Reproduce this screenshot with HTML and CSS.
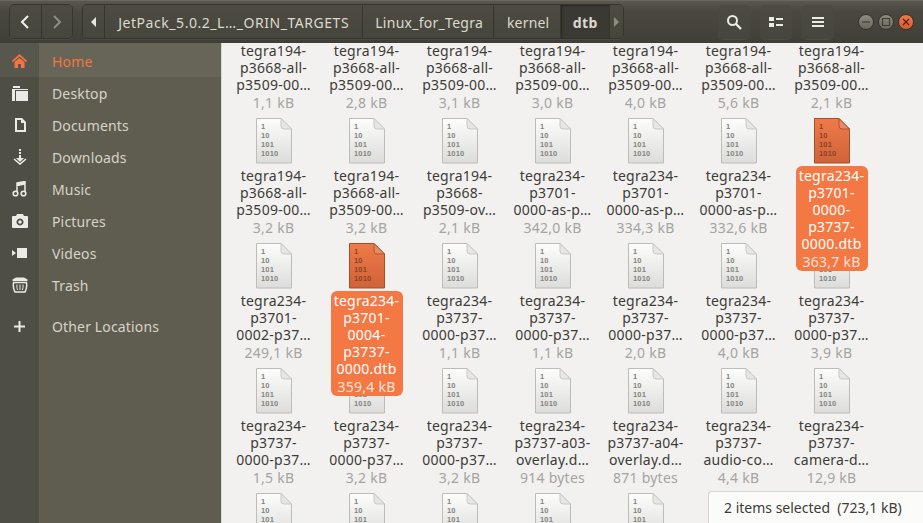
FILE: index.html
```html
<!DOCTYPE html>
<html lang="en">
<head>
<meta charset="utf-8">
<title>dtb</title>
<link rel="stylesheet" href="styles.css">
</head>
<body>
<svg class="defs" width="0" height="0" aria-hidden="true">
  <defs>
    <linearGradient id="paper" x1="0" y1="0" x2="0" y2="1"><stop offset="0" stop-color="#fdfdfc"/><stop offset="1" stop-color="#dcdcda"/></linearGradient>
    <linearGradient id="paperSel" x1="0" y1="0" x2="0" y2="1"><stop offset="0" stop-color="#ee7a4a"/><stop offset="1" stop-color="#cf6338"/></linearGradient>
    <symbol id="doc" viewBox="0 0 36 46">
      <path d="M.5.5H25L35.500 11V45H.5Z" fill="url(#paper)" stroke="#bcbcb8"/>
      <path d="M25 .5V8a3 3 0 0 0 3 3H35.500Z" fill="#e6e6e4" stroke="#c8c8c4"/>
      <g class="bits" fill="#85857e"><text x="5" y="11">1</text><text x="5" y="20">10</text><text x="5" y="29">101</text><text x="5" y="38">1010</text></g>
    </symbol>
    <symbol id="docsel" viewBox="0 0 36 46">
      <path d="M.5.5H25L35.500 11V45H.5Z" fill="url(#paperSel)" stroke="#a94c28"/>
      <path d="M25 .5V8a3 3 0 0 0 3 3H35.500Z" fill="#e98a63" stroke="#b3532d"/>
      <g class="bits" fill="#8a4426"><text x="5" y="11">1</text><text x="5" y="20">10</text><text x="5" y="29">101</text><text x="5" y="38">1010</text></g>
    </symbol>
  </defs>
</svg>
<div class="window">
  <header class="header">
    <div class="group nav">
      <button class="btn nav-btn"><svg width="12" height="14" viewBox="0 0 12 14"><path d="M9 1 3 7l6 6" fill="none" stroke="#f2f1ed" stroke-width="2"/></svg></button>
      <button class="btn nav-btn"><svg width="12" height="14" viewBox="0 0 12 14"><path d="m3 1 6 6-6 6" fill="none" stroke="#8f8d82" stroke-width="2"/></svg></button>
    </div>
    <div class="group path">
      <button class="btn seg seg-arrow"><svg width="6" height="10" viewBox="0 0 6 10"><path d="M5 0v10L0 5Z" fill="#e8e6e0"/></svg></button>
      <button class="btn seg seg-jet">JetPack_5.0.2_L…_ORIN_TARGETS</button>
      <button class="btn seg seg-linux">Linux_for_Tegra</button>
      <button class="btn seg seg-kernel">kernel</button>
      <button class="btn seg seg-dtb">dtb</button>
      <button class="btn seg seg-end"><svg width="6" height="10" viewBox="0 0 6 10"><path d="M0 0v10l5-5Z" fill="#8f8d82"/></svg></button>
    </div>
    <div class="tools">
      <button class="group btn tool"><svg width="16" height="16" viewBox="0 0 16 16"><circle cx="6.5" cy="6.5" r="4.5" fill="none" stroke="#eceae5" stroke-width="2"/><path d="m10 10 5 5" stroke="#eceae5" stroke-width="2.4"/></svg></button>
      <button class="group btn tool"><svg width="14" height="12" viewBox="0 0 14 12"><path d="M0 1h5v4H0zM7 2h7v2H7zM0 7h5v4H0zM7 8h7v2H7z" fill="#eceae5"/></svg></button>
      <button class="group btn tool"><svg width="14" height="12" viewBox="0 0 14 12"><path d="M1 1h12v2H1zM1 5h12v2H1zM1 9h12v2H1z" fill="#eceae5"/></svg></button>
    </div>
    <div class="winctl">
      <span class="wc"><svg width="10" height="10" viewBox="0 0 10 10"><path d="M1 5h8" stroke="#3e3d36" stroke-width="1.2"/></svg></span>
      <span class="wc"><svg width="10" height="10" viewBox="0 0 10 10"><path d="M1.5 1.5h7v7h-7z" fill="none" stroke="#3e3d36" stroke-width="1.2"/></svg></span>
      <span class="wc wc-close"><svg width="10" height="10" viewBox="0 0 10 10"><path d="m2 2 6 6M8 2l-6 6" stroke="#4b2414" stroke-width="1.3"/></svg></span>
    </div>
  </header>
  <div class="body">
    <nav class="side">
      <a class="place active"><span class="pi"><svg width="17" height="16" viewBox="0 0 17 16"><path d="M8.5 1 0.8 8l1.2 1.2L8.5 3.500 15 9.200 16.200 8ZM3.500 9v6H7v-4h3v4h3.500V9L8.500 5Z" fill="#f47542"/></svg></span><span class="pl">Home</span></a>
      <a class="place"><span class="pi"><svg width="16" height="15" viewBox="0 0 16 15"><path d="M1 0h7v2H1zM0 3h3v12H0zM4 5h12v10H4z" fill="#eceae5"/><path d="M0 3h16v1H0z" fill="#eceae5"/></svg></span><span class="pl">Desktop</span></a>
      <a class="place"><span class="pi"><svg width="14" height="16" viewBox="0 0 14 16"><path d="M2 1h7l4 4v10H2ZM4 3v10h7V6H8V3Z" fill="#eceae5" fill-rule="evenodd"/></svg></span><span class="pl">Documents</span></a>
      <a class="place"><span class="pi"><svg width="14" height="16" viewBox="0 0 14 16"><path d="M6 0h2v2H6zM6 3h2v2H6zM6 6h2v3h3l-4 4-4-4h3Z" fill="#eceae5"/><path d="M1 10 7 15 13 10" fill="none" stroke="#eceae5" stroke-width="1.600"/></svg></span><span class="pl">Downloads</span></a>
      <a class="place"><span class="pi"><svg width="16" height="16" viewBox="0 0 16 16"><path d="M5 3v8M13 1v10M5 2l8-1.500V3L5 4.500Z" fill="#eceae5" stroke="#eceae5" stroke-width="1.500"/><circle cx="3.500" cy="12.500" r="2.300" fill="none" stroke="#eceae5" stroke-width="1.600"/><circle cx="11.500" cy="12.500" r="2.300" fill="none" stroke="#eceae5" stroke-width="1.600"/></svg></span><span class="pl">Music</span></a>
      <a class="place"><span class="pi"><svg width="16" height="14" viewBox="0 0 16 14"><path d="M5 0h6l1 2h3a1 1 0 0 1 1 1v10a1 1 0 0 1-1 1H1a1 1 0 0 1-1-1V3a1 1 0 0 1 1-1h3ZM8 4.500a3.500 3.500 0 1 0 .01 0ZM8 6.300a1.700 1.700 0 1 1-.01 0Z" fill="#eceae5" fill-rule="evenodd"/></svg></span><span class="pl">Pictures</span></a>
      <a class="place"><span class="pi"><svg width="15" height="10" viewBox="0 0 15 10"><path d="M5 0h10v10H5ZM0 2l4 3-4 3Z" fill="#eceae5"/></svg></span><span class="pl">Videos</span></a>
      <a class="place"><span class="pi"><svg width="16" height="16" viewBox="0 0 16 16"><path d="M4 .5h8l3.500 2v1.500H.5V2.500Z" fill="#eceae5"/><path d="M1.500 5.500C1 9 1.500 12.500 3 15h10c1.500-2.500 2-6 1.500-9.500Z" fill="none" stroke="#eceae5" stroke-width="1.500"/><path d="M5 7.500c-.3 2 0 4 .6 5.500M8 7.500V13M11 7.500c.3 2 0 4-.6 5.500" fill="none" stroke="#eceae5"/></svg></span><span class="pl">Trash</span></a>
      <a class="place place-other"><span class="pi"><svg width="11" height="11" viewBox="0 0 11 11"><path d="M4.500 0h2v4.500H11v2H6.500V11h-2V6.500H0v-2h4.500Z" fill="#eceae5"/></svg></span><span class="pl">Other Locations</span></a>
    </nav>
    <main class="main">
      <div class="grid">
        <div class="item"><svg class="ic"><use href="#doc"/></svg><div class="name">tegra194-<br>p3668-all-<br>p3509-00…</div><div class="size">1,1 kB</div></div>
        <div class="item"><svg class="ic"><use href="#doc"/></svg><div class="name">tegra194-<br>p3668-all-<br>p3509-00…</div><div class="size">2,8 kB</div></div>
        <div class="item"><svg class="ic"><use href="#doc"/></svg><div class="name">tegra194-<br>p3668-all-<br>p3509-00…</div><div class="size">3,1 kB</div></div>
        <div class="item"><svg class="ic"><use href="#doc"/></svg><div class="name">tegra194-<br>p3668-all-<br>p3509-00…</div><div class="size">3,0 kB</div></div>
        <div class="item"><svg class="ic"><use href="#doc"/></svg><div class="name">tegra194-<br>p3668-all-<br>p3509-00…</div><div class="size">4,0 kB</div></div>
        <div class="item"><svg class="ic"><use href="#doc"/></svg><div class="name">tegra194-<br>p3668-all-<br>p3509-00…</div><div class="size">5,6 kB</div></div>
        <div class="item"><svg class="ic"><use href="#docsel"/></svg><div class="name">tegra194-<br>p3668-all-<br>p3509-00…</div><div class="size">2,1 kB</div></div>

        <div class="item"><svg class="ic"><use href="#doc"/></svg><div class="name">tegra194-<br>p3668-all-<br>p3509-00…</div><div class="size">3,2 kB</div></div>
        <div class="item"><svg class="ic"><use href="#doc"/></svg><div class="name">tegra194-<br>p3668-all-<br>p3509-00…</div><div class="size">3,2 kB</div></div>
        <div class="item"><svg class="ic"><use href="#doc"/></svg><div class="name">tegra194-<br>p3668-<br>p3509-ov…</div><div class="size">2,1 kB</div></div>
        <div class="item"><svg class="ic"><use href="#doc"/></svg><div class="name">tegra234-<br>p3701-<br>0000-as-p…</div><div class="size">342,0 kB</div></div>
        <div class="item"><svg class="ic"><use href="#doc"/></svg><div class="name">tegra234-<br>p3701-<br>0000-as-p…</div><div class="size">334,3 kB</div></div>
        <div class="item"><svg class="ic"><use href="#doc"/></svg><div class="name">tegra234-<br>p3701-<br>0000-as-p…</div><div class="size">332,6 kB</div></div>
        <div class="item selected"><svg class="ic"><use href="#docsel"/></svg><div class="label"><div class="name">tegra234-<br>p3701-<br>0000-<br>p3737-<br>0000.dtb</div><div class="size">363,7 kB</div></div></div>

        <div class="item"><svg class="ic"><use href="#doc"/></svg><div class="name">tegra234-<br>p3701-<br>0002-p37…</div><div class="size">249,1 kB</div></div>
        <div class="item selected"><svg class="ic"><use href="#docsel"/></svg><div class="label"><div class="name">tegra234-<br>p3701-<br>0004-<br>p3737-<br>0000.dtb</div><div class="size">359,4 kB</div></div></div>
        <div class="item"><svg class="ic"><use href="#doc"/></svg><div class="name">tegra234-<br>p3737-<br>0000-p37…</div><div class="size">1,1 kB</div></div>
        <div class="item"><svg class="ic"><use href="#doc"/></svg><div class="name">tegra234-<br>p3737-<br>0000-p37…</div><div class="size">1,1 kB</div></div>
        <div class="item"><svg class="ic"><use href="#doc"/></svg><div class="name">tegra234-<br>p3737-<br>0000-p37…</div><div class="size">2,0 kB</div></div>
        <div class="item"><svg class="ic"><use href="#doc"/></svg><div class="name">tegra234-<br>p3737-<br>0000-p37…</div><div class="size">4,0 kB</div></div>
        <div class="item"><svg class="ic"><use href="#doc"/></svg><div class="name">tegra234-<br>p3737-<br>0000-p37…</div><div class="size">3,9 kB</div></div>

        <div class="item"><svg class="ic"><use href="#doc"/></svg><div class="name">tegra234-<br>p3737-<br>0000-p37…</div><div class="size">1,5 kB</div></div>
        <div class="item"><svg class="ic"><use href="#doc"/></svg><div class="name">tegra234-<br>p3737-<br>0000-p37…</div><div class="size">3,2 kB</div></div>
        <div class="item"><svg class="ic"><use href="#doc"/></svg><div class="name">tegra234-<br>p3737-<br>0000-p37…</div><div class="size">3,2 kB</div></div>
        <div class="item"><svg class="ic"><use href="#doc"/></svg><div class="name">tegra234-<br>p3737-a03-<br>overlay.d…</div><div class="size">914 bytes</div></div>
        <div class="item"><svg class="ic"><use href="#doc"/></svg><div class="name">tegra234-<br>p3737-a04-<br>overlay.d…</div><div class="size">871 bytes</div></div>
        <div class="item"><svg class="ic"><use href="#doc"/></svg><div class="name">tegra234-<br>p3737-<br>audio-co…</div><div class="size">4,4 kB</div></div>
        <div class="item"><svg class="ic"><use href="#doc"/></svg><div class="name">tegra234-<br>p3737-<br>camera-d…</div><div class="size">12,9 kB</div></div>

        <div class="item"><svg class="ic"><use href="#doc"/></svg></div>
        <div class="item"><svg class="ic"><use href="#doc"/></svg></div>
        <div class="item"><svg class="ic"><use href="#doc"/></svg></div>
        <div class="item"><svg class="ic"><use href="#doc"/></svg></div>
        <div class="item"><svg class="ic"><use href="#doc"/></svg></div>
      </div>
      <div class="status">2 items selected&nbsp; (723,1 kB)</div>
    </main>
  </div>
</div>
</body>
</html>
```
FILE: styles.css
```css
* { box-sizing: border-box; }
html, body { margin: 0; height: 100%; overflow: hidden; }
body { font-family: "Noto Sans", "Open Sans", sans-serif; font-size: 14px; background: #f2f1f0; }
.defs { position: absolute; }
.bits { font: 700 7.5px "Liberation Sans", sans-serif; letter-spacing: .2px; }

.window { display: flex; flex-direction: column; width: 923px; height: 523px; }

.header {
  display: flex; align-items: center; flex: 0 0 43px; height: 43px; padding: 0 9px 1px;
  background: linear-gradient(#5a574d, #4a483f 25%, #403f37);
  color: #dcd9cf;
  border-top: 1px solid #6a685c;
}
.group { display: flex; height: 35px; border: 1px solid #35342d; border-radius: 5px; box-shadow: inset 0 1px 0 rgba(255,255,255,.04), 0 1px 0 rgba(255,255,255,.06); }
.btn { display: flex; align-items: center; justify-content: center; padding: 0; color: inherit; font: inherit; background: linear-gradient(#4c4a41, #47463d); border: 0; }
.nav { width: 65px; overflow: hidden; }
.nav-btn { flex: 1; }
.nav-btn + .nav-btn { border-left: 1px solid #35342d; }
.path { width: 549px; margin-left: 9px; overflow: hidden; }
.seg { height: 100%; border-right: 1px solid #35342d; white-space: nowrap; padding-top: 2px; }
.seg-arrow { flex: 0 0 22px; padding-top: 0; }
.seg-jet { flex: 0 0 258px; letter-spacing: .55px; }
.seg-linux { flex: 0 0 131px; letter-spacing: .27px; padding-left: 2px; }
.seg-kernel { flex: 0 0 67px; letter-spacing: .2px; padding-left: 2px; }
.seg-dtb { flex: 0 0 49px; font-weight: 700; background: #3a3932; box-shadow: inset 1px 1px 2px rgba(0,0,0,.3); letter-spacing: .4px; }
.seg-end { flex: 1; border-right: 0; padding-top: 0; }
.tools { display: flex; gap: 10px; margin-left: 94px; }
.tool { width: 32px; }
.winctl { display: flex; gap: 4px; margin-left: 16px; padding-left: 8px; }
.wc { display: flex; align-items: center; justify-content: center; width: 16px; height: 16px; border-radius: 50%; background: linear-gradient(#8d8b80, #6a685d); border: 1px solid #36352e; }
.wc-close { background: linear-gradient(#f07a4b, #df5a2b); }

.body { display: flex; flex: 1; min-height: 0; }
.side { flex: 0 0 222px; background: linear-gradient(90deg, #4f4e45 39px, #5f5d50 39px); border-right: 1px solid #d9d8d3; letter-spacing: .15px; }
.place { display: flex; align-items: center; height: 32px; color: #d6d3c8; }
.place.active { height: 34px; padding-top: 2px; color: #f47542; background: rgba(255,255,255,.05); }
.place-other { margin-top: 9px; }
.pi { display: flex; align-items: center; justify-content: center; flex: 0 0 39px; }
.pl { padding-left: 13px; }

.main { position: relative; flex: 1; overflow: hidden; background: #f2f1f0; }
.grid { display: grid; grid-template-columns: repeat(7, 93px); grid-auto-rows: 125px; margin: -50px 0 0 5px; letter-spacing: .25px; }
.item { display: flex; flex-direction: column; align-items: center; text-align: center; line-height: 17px; color: #3d3c36; white-space: nowrap; }
.ic { flex: none; width: 36px; height: 46px; margin-bottom: 3px; }
.size { color: #a5a49f; line-height: 18px; margin-top: 1px; }
.selected { position: relative; z-index: 1; }
.label { width: 72px; background: #f47844; color: #fff; border-radius: 6px; margin-top: -1px; padding: 1px 0 0; height: 105px; }
.label .size { color: #fde2d6; }
.status {
  position: absolute; right: 0; bottom: 0; z-index: 2; width: 215px; height: 32px; padding: 6px 0 0 15px;
  background: #fbfbfa; border: 1px solid #d5d4d0; border-width: 1px 0 0 1px; border-radius: 4px 0 0 0; color: #3d3c36;
}
```
